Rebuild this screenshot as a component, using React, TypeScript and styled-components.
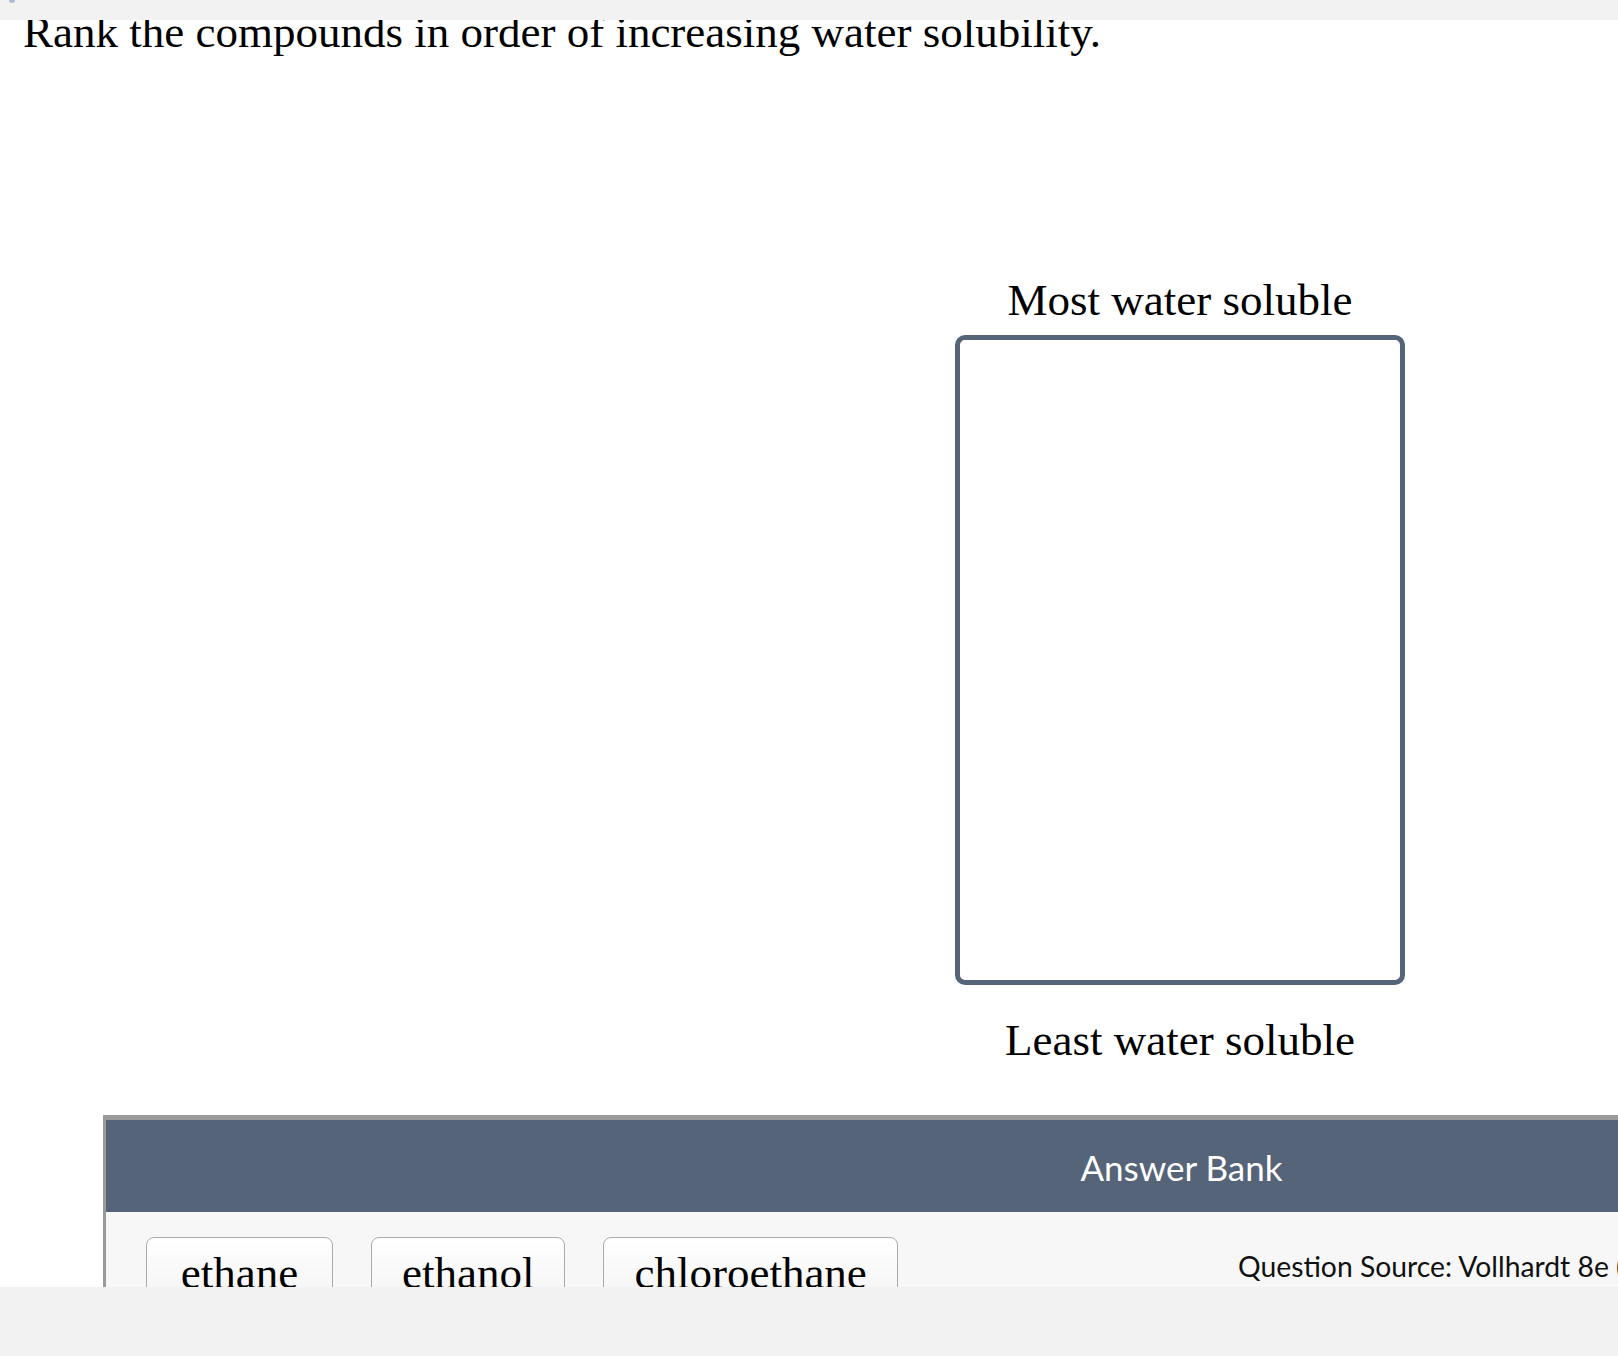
import React from "react";
import styled, { createGlobalStyle } from "styled-components";

const GlobalStyle = createGlobalStyle`
  html, body {
    margin: 0;
    padding: 0;
    background: #ffffff;
    overflow: hidden;
  }
  body {
    font-family: "Liberation Serif", "Times New Roman", serif;
    color: #000;
  }
`;

const TopBar = styled.div`
  position: fixed;
  top: 0;
  left: 0;
  right: 0;
  height: 20px;
  background: #f2f2f2;
  z-index: 10;
  display: flex;
  align-items: flex-start;
  padding-left: 9px;
`;

const TopMark = styled.span`
  width: 6px;
  height: 3px;
  border-radius: 0 0 3px 3px;
  background: #a9bfd4;
`;

const BottomBar = styled.div`
  position: fixed;
  left: 0;
  right: 0;
  top: 1287px;
  height: 69px;
  background: #f2f2f2;
  z-index: 10;
`;

const Page = styled.main`
  display: flex;
  flex-direction: column;
  padding: 7px 0 0 23px;
  width: 2300px;
`;

const Prompt = styled.h1`
  margin: 0;
  font-family: "Liberation Serif", "Times New Roman", serif;
  font-weight: 400;
  font-size: 45px;
  line-height: 50px;
`;

const Question = styled.section`
  display: flex;
  flex-direction: column;
  margin-left: 80px;
  width: 2154px;
`;

const RankColumn = styled.div`
  display: flex;
  flex-direction: column;
  align-items: center;
  margin-top: 218px;
`;

const RankLabel = styled.div<{ $gap?: number }>`
  font-family: "Liberation Serif", "Times New Roman", serif;
  font-size: 45px;
  line-height: 50px;
  margin-top: ${(p) => p.$gap ?? 0}px;
`;

const DropZone = styled.div`
  box-sizing: border-box;
  width: 450px;
  height: 650px;
  margin-top: 10px;
  border: 5px solid #556479;
  border-radius: 10px;
  background: #fff;
`;

const Bank = styled.div`
  display: flex;
  flex-direction: column;
  margin-top: 50px;
  border-top: 5px solid #9a9a9a;
  border-left: 3px solid #9a9a9a;
`;

const BankHeader = styled.div`
  height: 92px;
  background: #556479;
  color: #fff;
  display: flex;
  align-items: center;
  justify-content: center;
  font-family: Lato, "Open Sans", sans-serif;
  font-size: 35px;
  padding-top: 2px;
  box-sizing: border-box;
`;

const BankBody = styled.div`
  display: grid;
  grid-template-columns: 1092px 1fr;
  align-items: start;
  background: #f7f7f7;
  padding: 25px 0 0 40px;
  height: 200px;
`;

const ChipRow = styled.div`
  display: flex;
  gap: 38px;
`;

const Chip = styled.div`
  box-sizing: border-box;
  min-width: 187px;
  padding: 10px 30px 0;
  height: 90px;
  text-align: center;
  border: 1px solid #aaaaaa;
  border-radius: 8px;
  background: linear-gradient(#ffffff, #efefef);
  font-family: "Liberation Serif", "Times New Roman", serif;
  font-size: 45px;
  line-height: 50px;
  white-space: nowrap;
`;

const Source = styled.div`
  margin-top: 13px;
  font-family: Lato, "Open Sans", sans-serif;
  font-size: 28.3px;
  line-height: 1.2;
  white-space: nowrap;
  color: #111;
`;

const compounds = ["ethane", "ethanol", "chloroethane"];

export default function App() {
  return (
    <>
      <GlobalStyle />
      <TopBar>
        <TopMark />
      </TopBar>
      <Page>
        <Prompt>Rank the compounds in order of increasing water solubility.</Prompt>
        <Question>
          <RankColumn>
            <RankLabel>Most water soluble</RankLabel>
            <DropZone />
            <RankLabel $gap={30}>Least water soluble</RankLabel>
          </RankColumn>
          <Bank>
            <BankHeader>Answer Bank</BankHeader>
            <BankBody>
              <ChipRow>
                {compounds.map((c) => (
                  <Chip key={c}>{c}</Chip>
                ))}
              </ChipRow>
              <Source>
                Question Source: Vollhardt 8e (Organic Chemistry) &nbsp;|&nbsp; Publisher: Macmillan Learning
              </Source>
            </BankBody>
          </Bank>
        </Question>
      </Page>
      <BottomBar />
    </>
  );
}
